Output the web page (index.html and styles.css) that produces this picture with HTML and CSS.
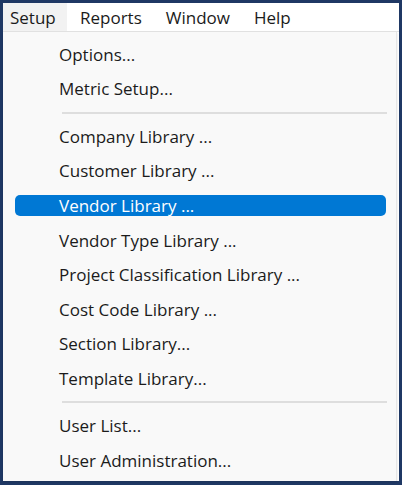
FILE: index.html
```html
<!DOCTYPE html>
<html>
<head>
<meta charset="utf-8">
<link rel="stylesheet" href="styles.css">
</head>
<body>
<div class="frame">
  <div class="menubar">
    <div class="mb-item mb-active">Setup</div>
    <div class="mb-item">Reports</div>
    <div class="mb-item">Window</div>
    <div class="mb-item">Help</div>
  </div>
  <div class="panel">
    <div class="item"><span class="pill">Options...</span></div>
    <div class="item"><span class="pill">Metric Setup...</span></div>
    <div class="sep"></div>
    <div class="item"><span class="pill">Company Library ...</span></div>
    <div class="item"><span class="pill">Customer Library ...</span></div>
    <div class="item selected"><span class="pill">Vendor Library ...</span></div>
    <div class="item"><span class="pill">Vendor Type Library ...</span></div>
    <div class="item"><span class="pill">Project Classification Library ...</span></div>
    <div class="item"><span class="pill">Cost Code Library ...</span></div>
    <div class="item"><span class="pill">Section Library...</span></div>
    <div class="item"><span class="pill">Template Library...</span></div>
    <div class="sep"></div>
    <div class="item"><span class="pill">User List...</span></div>
    <div class="item"><span class="pill">User Administration...</span></div>
  </div>
</div>
</body>
</html>
```
FILE: styles.css
```css
html, body {
  margin: 0;
  padding: 0;
  background: #ffffff;
}
.frame {
  width: 402px;
  height: 485px;
  box-sizing: border-box;
  border: 3px solid #1f3864;
  border-bottom-width: 4px;
  background: #ffffff;
  display: flex;
  flex-direction: column;
  font-family: "Open Sans", "Noto Sans", sans-serif;
  color: #1b1b1b;
}
.menubar {
  height: 28px;
  background: #ffffff;
  border-bottom: 1px solid #e3e3e3;
  display: flex;
  align-items: stretch;
  font-size: 17px;
}
.mb-item {
  display: flex;
  align-items: center;
  padding: 0 12px 0 12px;
}
.mb-active {
  background: #f2f2f2;
  box-sizing: border-box;
  width: 64px;
  padding: 0 0 0 7px;
  margin-right: 1px;
}
.panel {
  flex: 1;
  background: #f9f9f9;
  margin-right: 2px;
  border-right: 1px solid #e6e6e6;
  box-shadow: 0 1px 2px rgba(0, 0, 0, 0.12);
  padding-top: 5px;
  font-size: 17px;
}
.item {
  height: 34.65px;
  display: flex;
  align-items: center;
  padding: 0 10px 0 12px;
}
.pill {
  flex: 1;
  height: 21px;
  display: flex;
  align-items: center;
  padding-left: 44px;
  border-radius: 5px;
}
.selected .pill {
  background: #0078d4;
  color: #ffffff;
}
.sep {
  height: 12.5px;
  display: flex;
  align-items: center;
  padding: 0 9px 0 59px;
}
.sep::before {
  content: "";
  flex: 1;
  height: 2px;
  background: #dedede;
}
```
